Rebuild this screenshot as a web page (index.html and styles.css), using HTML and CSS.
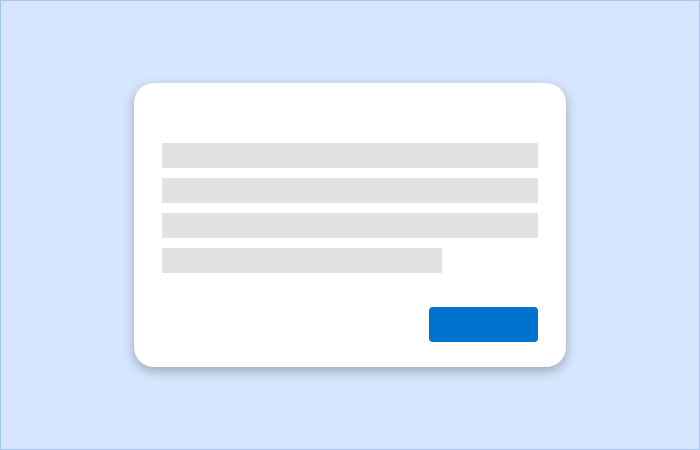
FILE: index.html
```html
<!DOCTYPE html>
<html lang="en">
<head>
<meta charset="utf-8">
<title>Dialog</title>
<link rel="stylesheet" href="styles.css">
</head>
<body>
<div class="stage">
  <div class="card">
    <div class="lines">
      <div class="line"></div>
      <div class="line"></div>
      <div class="line"></div>
      <div class="line short"></div>
    </div>
    <div class="actions">
      <button class="btn" type="button"></button>
    </div>
  </div>
</div>
</body>
</html>
```

FILE: styles.css
```css
html, body {
  margin: 0;
  padding: 0;
}
body {
  width: 700px;
  height: 450px;
  font-family: "Liberation Sans", Arial, sans-serif;
}
.stage {
  box-sizing: border-box;
  width: 700px;
  height: 450px;
  background: #d6e6fe;
  border: 1px solid #a3c6f7;
  display: flex;
  align-items: center;
  justify-content: center;
}
.card {
  box-sizing: border-box;
  width: 432px;
  height: 284px;
  background: #ffffff;
  border-radius: 20px;
  box-shadow: 0 4px 12px rgba(0, 0, 0, 0.28);
  padding: 60px 28px 25px;
  display: flex;
  flex-direction: column;
}
.lines {
  display: flex;
  flex-direction: column;
  gap: 10px;
}
.line {
  height: 25px;
  background: #e2e2e2;
}
.line.short {
  width: 280px;
}
.actions {
  margin-top: auto;
  display: flex;
  justify-content: flex-end;
}
.btn {
  width: 109px;
  height: 35px;
  border: 0;
  padding: 0;
  border-radius: 4px;
  background: #0073cf;
}
```
